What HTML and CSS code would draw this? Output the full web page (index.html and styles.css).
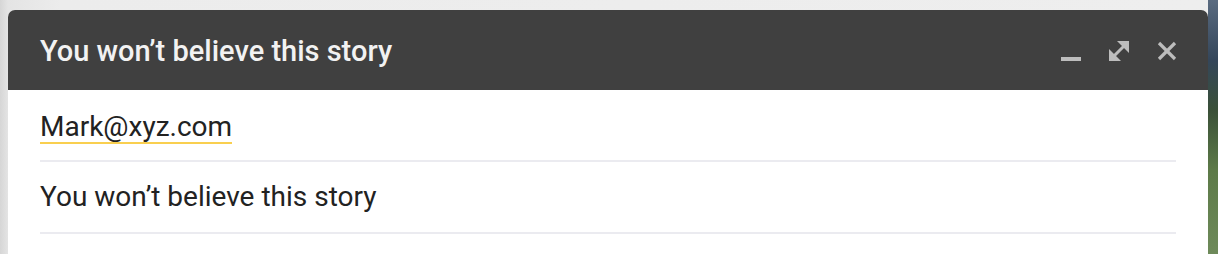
FILE: index.html
```html
<!DOCTYPE html>
<html>
<head>
<meta charset="utf-8">
<link rel="stylesheet" href="styles.css">
</head>
<body>
<div class="page">
  <div class="backdrop">
    <div class="window">
      <div class="header">
        <div class="title">You won’t believe this story</div>
        <div class="icons">
          <svg class="icon" viewBox="0 0 20 20" width="20" height="20"><rect x="0" y="16" width="20" height="4" fill="#bdbdbd"/></svg>
          <svg class="icon" viewBox="0 0 20 20" width="20" height="20"><polygon points="8,0 20,0 20,12" fill="#bdbdbd"/><polygon points="0,8 0,20 12,20" fill="#bdbdbd"/><line x1="15" y1="5" x2="5" y2="15" stroke="#bdbdbd" stroke-width="3"/></svg>
          <svg class="icon" viewBox="0 0 20 20" width="20" height="20"><line x1="2" y1="2" x2="18" y2="18" stroke="#bdbdbd" stroke-width="3.2"/><line x1="18" y1="2" x2="2" y2="18" stroke="#bdbdbd" stroke-width="3.2"/></svg>
        </div>
      </div>
      <div class="content">
        <div class="field to"><span class="recipient">Mark@xyz.com</span></div>
        <div class="field subject">You won’t believe this story</div>
      </div>
    </div>
  </div>
  <div class="strip"></div>
</div>
</body>
</html>
```
FILE: styles.css
```css
html, body {
  margin: 0;
  padding: 0;
}
body {
  width: 1218px;
  height: 254px;
  overflow: hidden;
  font-family: Roboto, "Liberation Sans", sans-serif;
}
.page {
  display: flex;
  height: 254px;
}
.backdrop {
  flex: 1;
  padding: 10px 0 0 8px;
  background: linear-gradient(to right, #d6d6d6 0, #e4e4e4 8px, #ececec 60px, #eeeeee 100%);
  display: flex;
  flex-direction: column;
}
.window {
  width: 1200px;
  flex: 1;
  border-radius: 7px 7px 0 0;
  overflow: hidden;
  background: #fff;
  display: flex;
  flex-direction: column;
}
.header {
  height: 80px;
  box-sizing: border-box;
  padding: 2px 31px 0 32px;
  background: #404040;
  display: flex;
  align-items: center;
  justify-content: space-between;
}
.title {
  color: #f2f2f2;
  font-size: 29px;
  font-weight: 500;
  line-height: 30px;
}
.icons {
  display: flex;
  gap: 28px;
  align-items: center;
}
.icon {
  display: block;
}
.content {
  flex: 1;
  padding: 0 32px;
  background: #fff;
}
.field {
  height: 72px;
  box-sizing: border-box;
  border-bottom: 2px solid #ebebf0;
  color: #222;
  font-size: 28px;
  line-height: 30px;
}
.field.to {
  padding-top: 22px;
}
.recipient {
  display: inline-block;
  border-bottom: 2px solid #f9cf4f;
}
.field.subject {
  padding-top: 20px;
}
.strip {
  width: 10px;
  background: linear-gradient(to bottom, #5a6b80 0, #34465a 60px, #3a5038 110px, #5d7a48 170px, #6e8a5a 254px);
}
```
